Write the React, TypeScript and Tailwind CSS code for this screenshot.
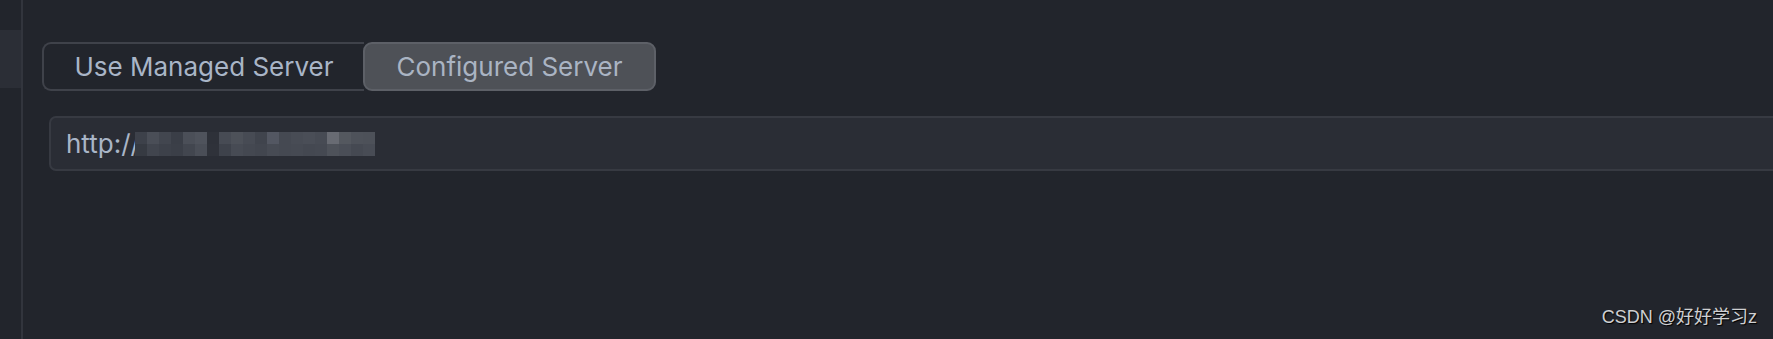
import React from 'react';

const pixels: string[][] = [
  ['#3d414a', '#4a4e57', '#42464f', '#3a3e47', '#4b4f58', '#4f535c', '#2e3139', '#474b54', '#4d5159', '#474b54', '#40444d', '#535762', '#454952', '#484c55', '#4a4e57', '#474b54', '#686b73', '#54585f', '#4e525a', '#4d5159'],
  ['#363a42', '#41454e', '#3d414a', '#3b3f48', '#42464f', '#4a4e57', '#2f323a', '#3e424b', '#474b54', '#444851', '#42464f', '#474b54', '#454952', '#464a53', '#444851', '#454952', '#4e525a', '#4a4e57', '#454952', '#484c55'],
];

const App: React.FC = () => {
  return (
    <div className="relative flex w-[1773px] h-[339px] overflow-hidden bg-[#22252c]" style={{ fontFamily: 'Inter, "Noto Sans", sans-serif' }}>
      {/* Sidebar edge */}
      <div className="w-[23px] shrink-0 pt-[30px] border-r-2 border-[#32353d]">
        <div className="h-[58px] bg-[#2b2e36]" />
      </div>

      {/* Main */}
      <div className="flex flex-col pl-[19px] pt-[42px] overflow-hidden">
        {/* Segmented control */}
        <div className="flex">
          <button className="w-[322px] h-[49px] rounded-l-[9px] border-2 border-r-0 border-[#3f424a] text-[26px] text-[#a9b5c7] bg-transparent">
            Use Managed Server
          </button>
          <button className="w-[293px] h-[49px] -ml-px rounded-[9px] border-2 border-[#5d6067] bg-[#4e5157] text-[26px] text-[#aab4c3]">
            Configured Server
          </button>
        </div>

        {/* URL field */}
        <div className="ml-[7px] mt-[25px] w-[1760px] h-[55px] flex items-center pl-[15px] rounded-[7px] border-2 border-[#373a42] bg-[#2a2d35]">
          <span className="text-[26px] text-[#a9b5c7]">http://</span>
          <div className="flex flex-col -ml-[5px]">
            {pixels.map((row, i) => (
              <div key={i} className="flex">
                {row.map((c, j) => (
                  <div key={j} className="w-[12px] h-[12px]" style={{ backgroundColor: c }} />
                ))}
              </div>
            ))}
          </div>
        </div>
      </div>

      {/* Watermark */}
      <div className="absolute right-[16px] bottom-[8px] text-[18px] text-[#cfd0d2] [text-shadow:1px_1px_1px_#000]" style={{ fontFamily: '"Liberation Sans", "Noto Sans CJK SC", sans-serif' }}>
        CSDN @好好学习z
      </div>
    </div>
  );
};

export default App;
